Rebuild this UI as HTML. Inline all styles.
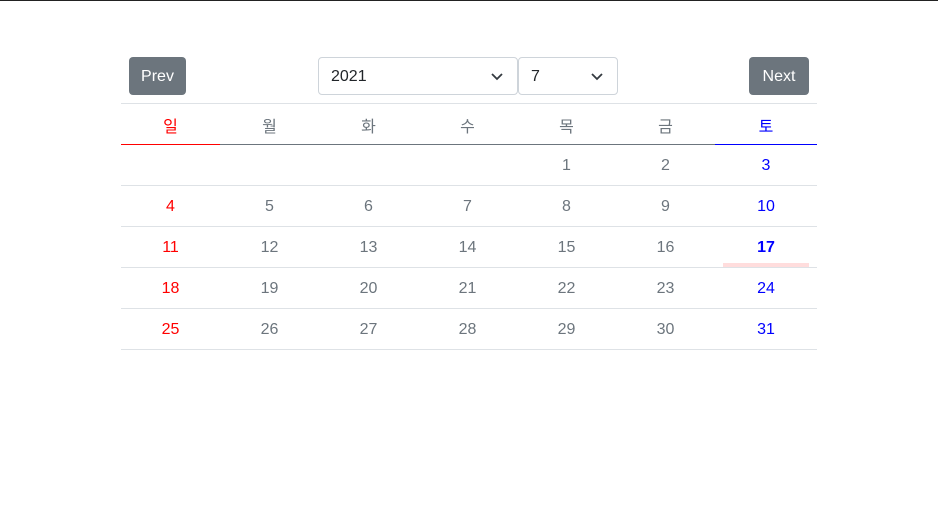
<!DOCTYPE html>
<html><head><meta charset="utf-8"><style>
body{margin:0;width:938px;height:508px;background:#fff;font-family:"Liberation Sans","Noto Sans CJK KR",sans-serif;position:relative;overflow:hidden}
.top{position:absolute;left:0;top:0;width:938px;height:1px;background:#222}
.btn{position:absolute;top:57px;height:38px;background:#6c757d;color:#fff;border-radius:4px;font-size:16px;line-height:39px;text-align:center}
.sel{position:absolute;top:57px;height:36px;border:1px solid #ced4da;border-radius:4px;font-size:16px;line-height:37px;color:#212529;padding-left:12px;box-sizing:content-box}
.sel svg{position:absolute;top:14px}
table{position:absolute;left:121px;top:103px;width:696px;border-collapse:separate;border-spacing:0;font-size:16px;color:#6c757d;table-layout:fixed}
td,th{height:39px;padding:1px 0 0;text-align:center;font-weight:normal;box-sizing:content-box}
th{border-top:1px solid #dee2e6;border-bottom:1px solid #6c757d}
td{border-bottom:1px solid #dee2e6}
.r{color:red}.b{color:blue}
th.r{border-bottom-color:red}th.b{border-bottom-color:blue}
</style></head><body>
<div class="top"></div>
<div class="btn" style="left:129px;width:57px">Prev</div>
<div class="sel" style="left:318px;width:186px">2021<svg style="left:172px" width="12" height="10" viewBox="0 0 12 10"><path d="M1 2l5 5 5-5" fill="none" stroke="#343a40" stroke-width="1.8"/></svg></div>
<div class="sel" style="left:518px;width:86px">7<svg style="left:72px" width="12" height="10" viewBox="0 0 12 10"><path d="M1 2l5 5 5-5" fill="none" stroke="#343a40" stroke-width="1.8"/></svg></div>
<div class="btn" style="left:749px;width:60px">Next</div>
<table>
<colgroup><col style="width:99px"><col style="width:99px"><col style="width:99px"><col style="width:99px"><col style="width:99px"><col style="width:99px"><col style="width:102px"></colgroup>
<tr><th class="r">일</th><th>월</th><th>화</th><th>수</th><th>목</th><th>금</th><th class="b">토</th></tr>
<tr><td></td><td></td><td></td><td></td><td>1</td><td>2</td><td class="b">3</td></tr>
<tr><td class="r">4</td><td>5</td><td>6</td><td>7</td><td>8</td><td>9</td><td class="b">10</td></tr>
<tr><td class="r">11</td><td>12</td><td>13</td><td>14</td><td>15</td><td>16</td><td class="b" style="font-weight:bold;position:relative">17<div style="position:absolute;left:8px;right:8px;bottom:0;height:4px;background:#fdd"></div></td></tr>
<tr><td class="r">18</td><td>19</td><td>20</td><td>21</td><td>22</td><td>23</td><td class="b">24</td></tr>
<tr><td class="r">25</td><td>26</td><td>27</td><td>28</td><td>29</td><td>30</td><td class="b">31</td></tr>
</table>
</body></html>
